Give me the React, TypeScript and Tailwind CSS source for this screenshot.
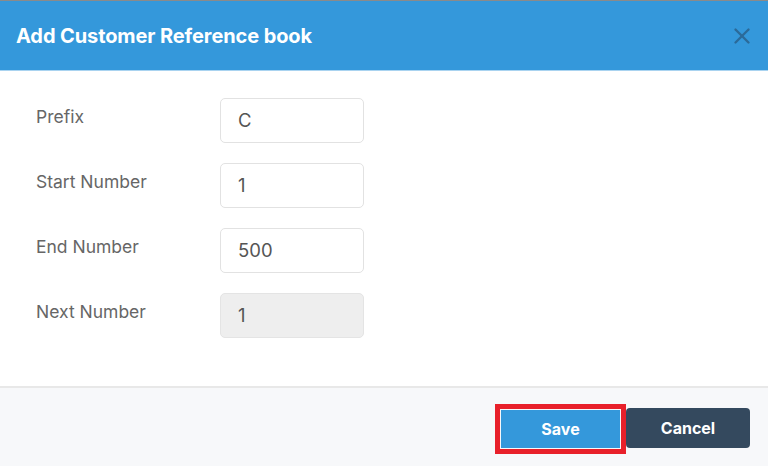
import { X } from "lucide-react";

const fields = [
    { label: "Prefix", value: "C", disabled: false },
    { label: "Start Number", value: "1", disabled: false },
    { label: "End Number", value: "500", disabled: false },
    { label: "Next Number", value: "1", disabled: true },
];

export default function App() {
    return (
        <div className="w-[768px] h-[466px] flex flex-col bg-white overflow-hidden font-['Inter',sans-serif]">
            {/* Header */}
            <div className="h-[71px] shrink-0 border-t border-[#8a8a8a] bg-[#3498db] border-b border-b-[#a9d3f0] flex items-center justify-between pl-4 pr-[13px]">
                <h2 className="text-white font-bold text-[20px] tracking-[-0.1px]">Add Customer Reference book</h2>
                <X className="w-[26px] h-[26px] text-[#2b6a99]" strokeWidth={2.2} />
            </div>

            {/* Body */}
            <div className="flex-1 flex flex-col gap-[20px] pt-[27px] pl-9">
                {fields.map(f => (
                    <div key={f.label} className="flex items-start">
                        <label className="w-[184px] pt-[6px] text-[17.5px] text-[#666]">{f.label}</label>
                        <div
                            className={`w-[144px] h-[45px] rounded-[5px] border flex items-center pl-[17px] text-[18.5px] text-[#555] ${
                                f.disabled ? "bg-[#eeeeee] border-[#e4e4e4]" : "bg-white border-[#e2e2e2]"
                            }`}
                        >
                            {f.value}
                        </div>
                    </div>
                ))}
            </div>

            {/* Footer */}
            <div className="h-[80px] shrink-0 bg-[#f7f8fa] border-t-2 border-[#e8e8e8] flex items-start justify-end pr-[18px] pt-[16px]">
                <div className="border-[5px] border-[#e8202a] p-px">
                    <button className="w-[119px] h-[38px] bg-[#3498db] text-white font-bold text-[16px]">Save</button>
                </div>
                <button className="mt-[4px] w-[124px] h-[40px] rounded-[4px] bg-[#34495e] text-white font-bold text-[16px]">
                    Cancel
                </button>
            </div>
        </div>
    );
}
